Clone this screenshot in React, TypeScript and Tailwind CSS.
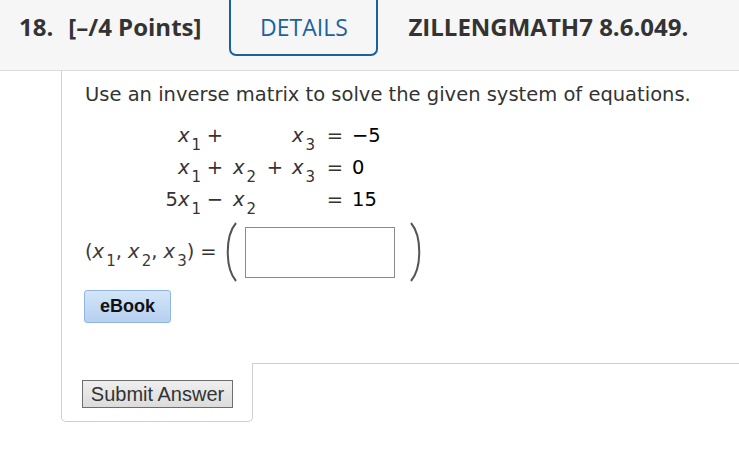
import React from 'react';

const verdana = { fontFamily: '"DejaVu Sans", Verdana, sans-serif' };

function X({ sub }: { sub: string }) {
  return (
    <span className="whitespace-nowrap">
      <i>x</i>
      <sub className="relative top-[3px] ml-[2px] text-[15px] leading-none align-sub not-italic">{sub}</sub>
    </span>
  );
}

function Paren({ side }: { side: 'l' | 'r' }) {
  return (
    <svg width="14" height="60" viewBox="0 0 14 60" className="shrink-0">
      {side === 'l' ? (
        <path d="M12 1 C 1 14, 1 46, 12 59" fill="none" stroke="#555" strokeWidth="2" />
      ) : (
        <path d="M2 1 C 13 14, 13 46, 2 59" fill="none" stroke="#555" strokeWidth="2" />
      )}
    </svg>
  );
}

export default function App() {
  return (
    <div className="w-[739px] h-[467px] bg-white overflow-hidden">
      {/* Header */}
      <div
        className="h-[71px] bg-[#f6f6f6] border-b border-[#dcdcdc] flex items-start text-[#333] font-bold text-[24px]"
        style={{ fontFamily: '"Open Sans", sans-serif' }}
      >
        <div className="pl-[19px] pt-[9px] flex">
          <span>18.</span>
          <span className="ml-[15px]">[–/4 Points]</span>
        </div>
        <div className="ml-[28px] w-[149px] h-[56px] border-2 border-t-0 border-[#16649f] rounded-b-[7px] flex items-center justify-center font-normal text-[#1b63a0] text-[23px]">
          DETAILS
        </div>
        <div className="ml-[30px] pt-[9px]">ZILLENGMATH7 8.6.049.</div>
      </div>

      <div className="pl-[61px]">
        {/* Question body */}
        <div className="border-l border-[#cfcfcf] h-[292px] pl-[23px] pt-[12px] text-[#333]" style={verdana}>
          <p className="text-[19.5px] leading-[24px]">Use an inverse matrix to solve the given system of equations.</p>

          <div className="mt-[13px] ml-[75px] grid grid-cols-[41px_28px_35px_22px_36px_26px_auto] text-[19.5px] leading-[32px] text-[#333]">
            <div className="text-right"><X sub="1" /></div>
            <div className="text-center">+</div>
            <div />
            <div />
            <div className="pl-[6px]"><X sub="3" /></div>
            <div className="text-center">=</div>
            <div className="pl-[4px] text-black">−5</div>

            <div className="text-right"><X sub="1" /></div>
            <div className="text-center">+</div>
            <div className="pl-[4px]"><X sub="2" /></div>
            <div className="text-center">+</div>
            <div className="pl-[6px]"><X sub="3" /></div>
            <div className="text-center">=</div>
            <div className="pl-[4px] text-black">0</div>

            <div className="text-right">5<X sub="1" /></div>
            <div className="text-center">−</div>
            <div className="pl-[4px]"><X sub="2" /></div>
            <div />
            <div />
            <div className="text-center">=</div>
            <div className="pl-[4px] text-black">15</div>
          </div>

          <div className="mt-[6px] flex items-center">
            <span className="text-[19.5px] text-[#3a3a3a]">
              (<X sub="1" />, <X sub="2" />, <X sub="3" />)
            </span>
            <span className="ml-[6px] text-[19.5px]">=</span>
            <div className="ml-[7px] flex items-center">
              <Paren side="l" />
              <div className="ml-[7px] w-[150px] h-[51px] border border-[#8a8a8a] bg-white" />
              <div className="ml-[14px]"><Paren side="r" /></div>
            </div>
          </div>

          <button
            className="mt-[8px] ml-[-1px] w-[87px] h-[33px] rounded-[3px] border border-[#8fb5e0] bg-gradient-to-b from-[#d3e5f9] to-[#b6d0f0] text-[18px] font-bold text-[#111] flex items-center justify-center"
            style={{ fontFamily: '"Liberation Sans", Arial, sans-serif' }}
          >
            eBook
          </button>
        </div>

        {/* Submit row */}
        <div className="flex">
          <div className="w-[192px] h-[59px] border-l border-r border-b border-[#cfcfcf] rounded-b-[5px] pl-[20px] pt-[17px]">
            <button
              className="w-[151px] h-[28px] border border-[#6e6e6e] bg-gradient-to-b from-[#efefef] to-[#dcdcdc] text-[20px] text-[#333] flex items-center justify-center"
              style={{ fontFamily: '"Liberation Sans", Arial, sans-serif' }}
            >
              Submit Answer
            </button>
          </div>
          <div className="flex-1 border-t border-[#cfcfcf]" />
        </div>
      </div>
    </div>
  );
}
